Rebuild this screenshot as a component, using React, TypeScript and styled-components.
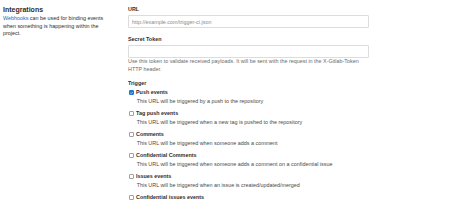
import { createGlobalStyle } from "styled-components";
import styled from "styled-components";

const GlobalStyle = createGlobalStyle`
  html, body {
    margin: 0;
    padding: 0;
    background: #ffffff;
  }
  body {
    font-family: "Liberation Sans", Arial, sans-serif;
    color: #2e2e2e;
  }
`;

interface TriggerItem {
  label: string;
  help?: string;
  checked?: boolean;
}

const triggers: TriggerItem[] = [
  { label: "Push events", help: "This URL will be triggered by a push to the repository", checked: true },
  { label: "Tag push events", help: "This URL will be triggered when a new tag is pushed to the repository" },
  { label: "Comments", help: "This URL will be triggered when someone adds a comment" },
  {
    label: "Confidential Comments",
    help: "This URL will be triggered when someone adds a comment on a confidential issue",
  },
  { label: "Issues events", help: "This URL will be triggered when an issue is created/updated/merged" },
  { label: "Confidential issues events" },
];

const CheckMark = () => (
  <svg width="4" height="4" viewBox="0 0 10 10">
    <path d="M2 5.2 L4.2 7.3 L8.2 2.8" fill="none" stroke="#fff" strokeWidth="1.8" strokeLinecap="round" strokeLinejoin="round" />
  </svg>
);

export default function App() {
  return (
    <>
      <GlobalStyle />
      <Page>
        <Sidebar>
          <Heading>Integrations</Heading>
          <Intro>
            <IntroLine>
              <IntroLink href="#">Webhooks</IntroLink>
              <span> can be used for binding events</span>
            </IntroLine>
            <IntroLine>when something is happening within the</IntroLine>
            <IntroLine>project.</IntroLine>
          </Intro>
        </Sidebar>
        <Form>
          <Label>URL</Label>
          <Input placeholder="http://example.com/trigger-ci.json" />
          <Label $top={7.5}>Secret Token</Label>
          <Input />
          <HelpBlock>
            Use this token to validate received payloads. It will be sent with the request in the X-Gitlab-Token HTTP
            header.
          </HelpBlock>
          <Label $top={6.75}>Trigger</Label>
          <TriggerList>
            {triggers.map((t) => (
              <TriggerRow key={t.label}>
                <CheckLine>
                  <Box $checked={!!t.checked}>{t.checked && <CheckMark />}</Box>
                  <CheckLabel>{t.label}</CheckLabel>
                </CheckLine>
                {t.help && <TriggerHelp>{t.help}</TriggerHelp>}
              </TriggerRow>
            ))}
          </TriggerList>
        </Form>
      </Page>
    </>
  );
}

const Page = styled.div`
  display: flex;
  width: 474px;
  height: 206px;
  overflow: hidden;
  box-sizing: border-box;
  padding: 6px 0 0 3px;
`;

const Sidebar = styled.div`
  width: 110px;
  flex-shrink: 0;
  margin-right: 15px;
`;

const Heading = styled.div`
  font-size: 7px;
  line-height: 8px;
  font-weight: 700;
`;

const Intro = styled.div`
  margin-top: 1.25px;
  display: flex;
  flex-direction: column;
`;

const IntroLine = styled.div`
  font-size: 5.4px;
  line-height: 7.5px;
  white-space: nowrap;
`;

const IntroLink = styled.a`
  color: #1b69b6;
  text-decoration: none;
`;

const Form = styled.div`
  width: 241px;
  display: flex;
  flex-direction: column;
`;

const Label = styled.div<{ $top?: number }>`
  font-size: 5.4px;
  line-height: 7px;
  font-weight: 700;
  margin-top: ${(p) => p.$top ?? 0}px;
  margin-bottom: 2px;
`;

const Input = styled.input`
  box-sizing: border-box;
  width: 241px;
  height: 13px;
  margin: 0;
  padding: 0 3px;
  border: 0.5px solid #dcdcdc;
  border-radius: 1px;
  font-family: "Liberation Sans", Arial, sans-serif;
  font-size: 5.4px;
  color: #2e2e2e;
  outline: none;
  &::placeholder {
    color: #8a8a8a;
  }
`;

const HelpBlock = styled.div`
  margin-top: 0.75px;
  font-size: 5.4px;
  line-height: 7.5px;
  color: #6b6b6b;
`;

const TriggerList = styled.div`
  display: flex;
  flex-direction: column;
  gap: 5px;
`;

const TriggerRow = styled.div`
  display: flex;
  flex-direction: column;
  gap: 2px;
`;

const CheckLine = styled.div`
  display: flex;
  align-items: center;
  height: 7px;
`;

const Box = styled.span<{ $checked: boolean }>`
  box-sizing: border-box;
  width: 5px;
  height: 5px;
  margin-left: 0.5px;
  margin-right: 2.5px;
  border-radius: 1px;
  display: flex;
  align-items: center;
  justify-content: center;
  border: 0.5px solid ${(p) => (p.$checked ? "#1f78d1" : "#a0a0a0")};
  background: ${(p) => (p.$checked ? "#1f78d1" : "#ffffff")};
`;

const CheckLabel = styled.span`
  font-size: 5.4px;
  line-height: 7px;
  font-weight: 700;
`;

const TriggerHelp = styled.div`
  padding-left: 8.7px;
  font-size: 5.4px;
  line-height: 7px;
  color: #4a4a4a;
`;
